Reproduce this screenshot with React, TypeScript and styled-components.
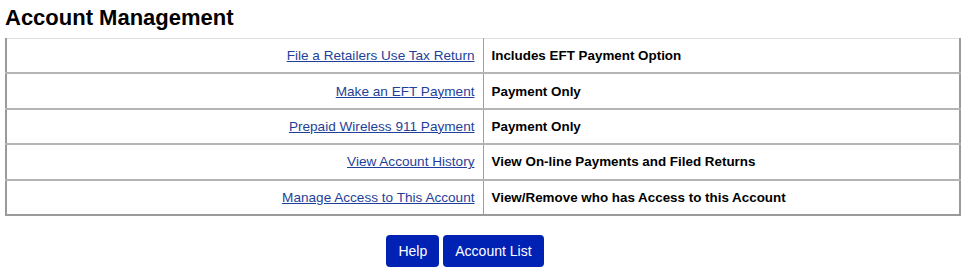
import React from 'react';
import styled, { createGlobalStyle } from 'styled-components';

const GlobalStyle = createGlobalStyle`
  body {
    margin: 0;
    background: #ffffff;
    font-family: "Liberation Sans", Arial, sans-serif;
    color: #000000;
  }
`;

const Page = styled.div`
  padding: 6px 19px 0 5px;
`;

const Title = styled.h1`
  margin: 0 0 8px 0;
  font-size: 22px;
  font-weight: bold;
  line-height: 24px;
`;

const Table = styled.table`
  width: 100%;
  border-collapse: collapse;
  border-top: 1px solid #e2e2e2;
  border-left: 2px solid #9a9a9a;
  border-right: 2px solid #9a9a9a;
  border-bottom: 2px solid #9a9a9a;
  font-size: 13px;
`;

const Row = styled.tr`
  border-bottom: 2px solid #b4b4b4;
  &:last-child {
    border-bottom: none;
  }
`;

const LinkCell = styled.td`
  width: 50%;
  height: 33.4px;
  padding: 0 8px;
  text-align: right;
  border-right: 1px solid #a0a0a0;
  font-size: 13.6px;
`;

const InfoCell = styled.td`
  padding: 0 8px;
  font-size: 13.4px;
  font-weight: bold;
`;

const Link = styled.a`
  color: #1f3f9a;
  text-decoration: underline;
  cursor: pointer;
`;

const Buttons = styled.div`
  display: flex;
  justify-content: center;
  gap: 4px;
  margin-top: 19px;
  padding-right: 36px;
`;

const Button = styled.button`
  height: 32px;
  padding: 0 12px;
  border: none;
  border-radius: 4px;
  background: #0022b4;
  color: #ffffff;
  font-family: "Liberation Sans", Arial, sans-serif;
  font-size: 14px;
  cursor: pointer;
`;

const rows = [
  { link: 'File a Retailers Use Tax Return', info: 'Includes EFT Payment Option' },
  { link: 'Make an EFT Payment', info: 'Payment Only' },
  { link: 'Prepaid Wireless 911 Payment', info: 'Payment Only' },
  { link: 'View Account History', info: 'View On-line Payments and Filed Returns' },
  { link: 'Manage Access to This Account', info: 'View/Remove who has Access to this Account' },
];

const App = () => (
  <>
    <GlobalStyle />
    <Page>
      <Title>Account Management</Title>
      <Table>
        <tbody>
          {rows.map(r => (
            <Row key={r.link}>
              <LinkCell>
                <Link>{r.link}</Link>
              </LinkCell>
              <InfoCell>{r.info}</InfoCell>
            </Row>
          ))}
        </tbody>
      </Table>
      <Buttons>
        <Button>Help</Button>
        <Button>Account List</Button>
      </Buttons>
    </Page>
  </>
);

export default App;
